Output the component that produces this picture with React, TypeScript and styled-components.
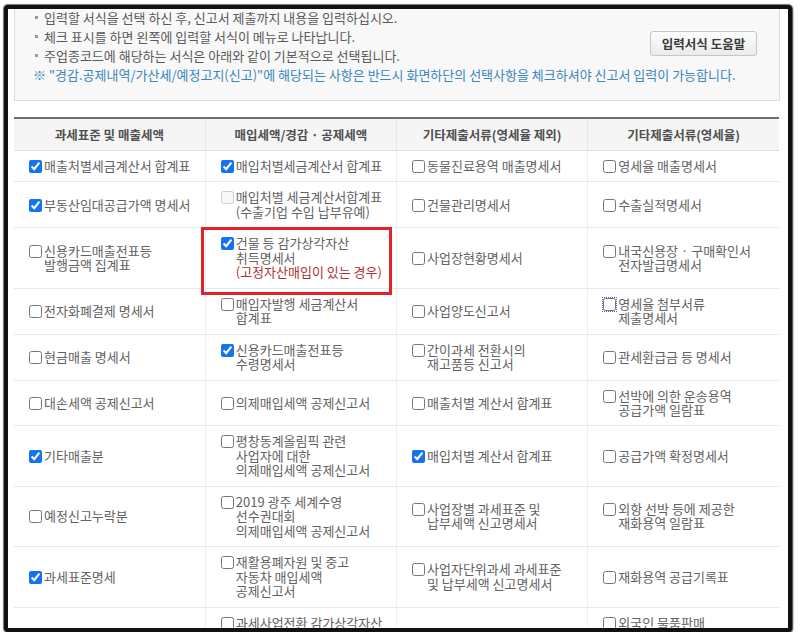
import React from "react";
import styled, { createGlobalStyle } from "styled-components";

type CheckState = "on" | "off" | "disabled" | "focus";

interface CellData {
  lines: string[];
  state: CheckState;
  note?: string;
  highlight?: boolean;
}

const GlobalStyle = createGlobalStyle`
  html, body {
    margin: 0;
    padding: 0;
    background: #ffffff;
  }
  body {
    font-family: "Noto Sans CJK KR", "Noto Sans", sans-serif;
  }
`;

const Page = styled.div`
  padding: 5px 0 0 4px;
`;

// the captured screenshot sits inside a thick black frame
const Frame = styled.div`
  width: 780px;
  height: 619px;
  border: 4px solid #111;
  border-radius: 4px;
  box-shadow: 0 0 1px 1px rgba(0, 0, 0, 0.55), 1px 1px 2px rgba(0, 0, 0, 0.45);
  overflow: hidden;
  background: #fff;
`;

const NoticeBox = styled.div`
  display: flex;
  align-items: flex-start;
  margin: -1px 8px 0 6px;
  padding: 0 22px 16px 18px;
  background: #f8f8f8;
  border: 1px solid #dcdcdc;
  border-top: none;
`;

// last line runs on under the button, so the column may overflow
const NoticeText = styled.div`
  flex: 1;
  min-width: 0;
  font-size: 13px;
  line-height: 19px;
  color: #5a5a5a;
  white-space: nowrap;
`;

const NoticeLine = styled.div<{ $info?: boolean }>`
  display: flex;
  align-items: center;
  color: ${(p) => (p.$info ? "#3a86bd" : "#5a5a5a")};
`;

const Bullet = styled.span`
  display: inline-block;
  width: 11px;
  flex-shrink: 0;
  &::before {
    content: "";
    display: block;
    width: 3px;
    height: 3px;
    margin-left: 2px;
    background: #9a9a9a;
  }
`;

const HelpButton = styled.button`
  flex-shrink: 0;
  margin-top: 23px;
  width: 107px;
  height: 25px;
  padding: 0;
  font-family: inherit;
  font-size: 12.5px;
  font-weight: 700;
  color: #3a3a3a;
  background: linear-gradient(#fdfdfd, #ebebeb);
  border: 1px solid #c6c6c6;
  border-radius: 3px;
  cursor: pointer;
`;

const Table = styled.table`
  margin: 16px 0 0 6px;
  width: 765px;
  table-layout: fixed;
  border-collapse: collapse;
  border-top: 2px solid #6e6e6e;
`;

const HeadCell = styled.th`
  height: 31px;
  padding: 0;
  font-size: 12.5px;
  font-weight: 700;
  line-height: 15px;
  color: #505050;
  text-align: center;
  background: #f5f5f5;
  border-bottom: 1px solid #dedede;
  border-left: 1px solid #e6e6e6;
  &:first-child {
    border-left: none;
  }
`;

const BodyCell = styled.td`
  position: relative;
  padding: 8px 4px 8px 15px;
  vertical-align: middle;
  border-bottom: 1px solid #e8e8e8;
  border-left: 1px solid #eeeeee;
  &:first-child {
    border-left: none;
  }
`;

const Item = styled.label`
  display: flex;
  align-items: flex-start;
  font-size: 13px;
  line-height: 14.45px;
  color: #626262;
  white-space: nowrap;
`;

const Box = styled.input<{ $focus?: boolean }>`
  flex-shrink: 0;
  width: 13px;
  height: 13px;
  margin: 1px 2px 0 0;
  accent-color: #1473f0;
  outline: ${(p) => (p.$focus ? "1px dotted #3468d8" : "none")};
  outline-offset: 0;
`;

const Note = styled.span`
  color: #b0322f;
`;

const Highlight = styled.div`
  position: absolute;
  top: -1px;
  left: -5px;
  right: 4px;
  bottom: -7px;
  border: 3px solid #e3232b;
  pointer-events: none;
  z-index: 2;
`;

const headers = [
  "과세표준 및 매출세액",
  "매입세액/경감 · 공제세액",
  "기타제출서류(영세율 제외)",
  "기타제출서류(영세율)",
];

const c = (state: CheckState, ...lines: string[]): CellData => ({ state, lines });

const rows: CellData[][] = [
  [
    c("on", "매출처별세금계산서 합계표"),
    c("on", "매입처별세금계산서 합계표"),
    c("off", "동물진료용역 매출명세서"),
    c("off", "영세율 매출명세서"),
  ],
  [
    c("on", "부동산임대공급가액 명세서"),
    c("disabled", "매입처별 세금계산서합계표", "(수출기업 수입 납부유예)"),
    c("off", "건물관리명세서"),
    c("off", "수출실적명세서"),
  ],
  [
    c("off", "신용카드매출전표등", "발행금액 집계표"),
    {
      state: "on",
      lines: ["건물 등 감가상각자산", "취득명세서"],
      note: "(고정자산매입이 있는 경우)",
      highlight: true,
    },
    c("off", "사업장현황명세서"),
    c("off", "내국신용장 · 구매확인서", "전자발급명세서"),
  ],
  [
    c("off", "전자화폐결제 명세서"),
    c("off", "매입자발행 세금계산서", "합계표"),
    c("off", "사업양도신고서"),
    c("focus", "영세율 첨부서류", "제출명세서"),
  ],
  [
    c("off", "현금매출 명세서"),
    c("on", "신용카드매출전표등", "수령명세서"),
    c("off", "간이과세 전환시의", "재고품등 신고서"),
    c("off", "관세환급금 등 명세서"),
  ],
  [
    c("off", "대손세액 공제신고서"),
    c("off", "의제매입세액 공제신고서"),
    c("off", "매출처별 계산서 합계표"),
    c("off", "선박에 의한 운송용역", "공급가액 일람표"),
  ],
  [
    c("on", "기타매출분"),
    c("off", "평창동계올림픽 관련", "사업자에 대한", "의제매입세액 공제신고서"),
    c("on", "매입처별 계산서 합계표"),
    c("off", "공급가액 확정명세서"),
  ],
  [
    c("off", "예정신고누락분"),
    c("off", "2019 광주 세계수영", "선수권대회", "의제매입세액 공제신고서"),
    c("off", "사업장별 과세표준 및", "납부세액 신고명세서"),
    c("off", "외항 선박 등에 제공한", "재화용역 일람표"),
  ],
  [
    c("on", "과세표준명세"),
    c("off", "재활용폐자원 및 중고", "자동차 매입세액", "공제신고서"),
    c("off", "사업자단위과세 과세표준", "및 납부세액 신고명세서"),
    c("off", "재화용역 공급기록표"),
  ],
  [
    c("off", "영세율 등 조기환급"),
    c("off", "과세사업전환 감가상각자산", "신고서", "(간이과세자)"),
    c("off", "현금매출명세서"),
    c("off", "외국인 물품판매", "기록표", "(면세판매장)"),
  ],
];

const Cell = ({ cell }: { cell: CellData }) => (
  <BodyCell>
    <Item>
      <Box
        type="checkbox"
        defaultChecked={cell.state === "on"}
        disabled={cell.state === "disabled"}
        $focus={cell.state === "focus"}
      />
      <span>
        {cell.lines.map((line, i) => (
          <React.Fragment key={i}>
            {i > 0 && <br />}
            {line}
          </React.Fragment>
        ))}
        {cell.note && (
          <>
            <br />
            <Note>{cell.note}</Note>
          </>
        )}
      </span>
    </Item>
    {cell.highlight && <Highlight />}
  </BodyCell>
);

const App = () => {
  return (
    <>
      <GlobalStyle />
      <Page>
        <Frame>
          <NoticeBox>
            <NoticeText>
              <NoticeLine>
                <Bullet />
                입력할 서식을 선택 하신 후, 신고서 제출까지 내용을 입력하십시오.
              </NoticeLine>
              <NoticeLine>
                <Bullet />
                체크 표시를 하면 왼쪽에 입력할 서식이 메뉴로 나타납니다.
              </NoticeLine>
              <NoticeLine>
                <Bullet />
                주업종코드에 해당하는 서식은 아래와 같이 기본적으로 선택됩니다.
              </NoticeLine>
              <NoticeLine $info>
                ※ "경감.공제내역/가산세/예정고지(신고)"에 해당되는 사항은 반드시
                화면하단의 선택사항을 체크하셔야 신고서 입력이 가능합니다.
              </NoticeLine>
            </NoticeText>
            <HelpButton>입력서식 도움말</HelpButton>
          </NoticeBox>

          <Table>
            <thead>
              <tr>
                {headers.map((h) => (
                  <HeadCell key={h}>{h}</HeadCell>
                ))}
              </tr>
            </thead>
            <tbody>
              {rows.map((row, r) => (
                <tr key={r}>
                  {row.map((cell, i) => (
                    <Cell key={i} cell={cell} />
                  ))}
                </tr>
              ))}
            </tbody>
          </Table>
        </Frame>
      </Page>
    </>
  );
};

export default App;
